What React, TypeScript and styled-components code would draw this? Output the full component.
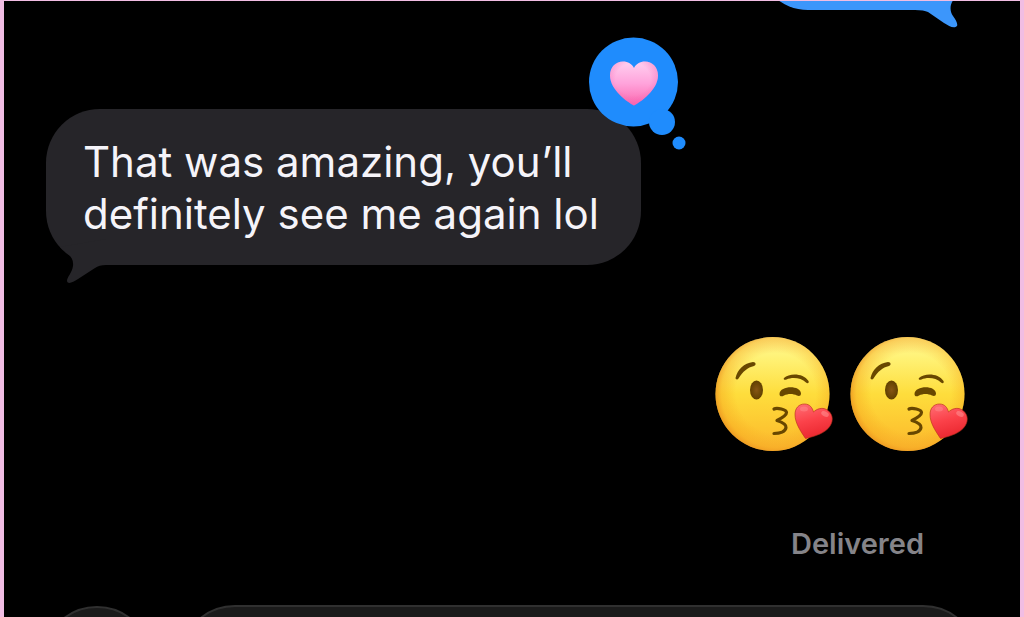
import React from "react";
import styled, { createGlobalStyle } from "styled-components";

const GlobalStyle = createGlobalStyle`
  * { box-sizing: border-box; }
  body {
    margin: 0;
    background: #000;
    font-family: Inter, "Liberation Sans", sans-serif;
  }
`;

const Screen = styled.main`
  display: flex;
  flex-direction: column;
  height: 100vh;
  overflow: hidden;
  background: #000;
  border: solid #f1bde3;
  border-width: 1px 4px 0;
`;

const Thread = styled.section`
  flex: none;
  display: flex;
  flex-direction: column;
  height: 604px;
  padding: 0 50px 0 42px;
`;

const SentBubble = styled.div`
  position: relative;
  flex: none;
  align-self: flex-end;
  width: 212px;
  height: 100px;
  margin-top: -91px;
  border-radius: 50px;
  background: #3c96fb;
`;

const SentTail = styled.svg`
  position: absolute;
  right: 11px;
  bottom: -20px;
`;

const ReceivedBubble = styled.div`
  position: relative;
  align-self: flex-start;
  margin-top: 99px;
  padding: 27px 42px 25px 37px;
  border-radius: 54px;
  background: #262529;
`;

const ReceivedTail = styled.svg`
  position: absolute;
  left: 10px;
  bottom: -20px;
`;

const MessageText = styled.p`
  margin: 0;
  color: #f5f4f9;
  font-size: 42px;
  line-height: 52px;
  white-space: nowrap;
`;

const Reaction = styled.svg`
  position: absolute;
  top: -73px;
  right: -46px;
`;

const EmojiMessage = styled.div`
  display: flex;
  align-self: flex-end;
  gap: 15px;
  margin-top: 71px;
`;

const Status = styled.p`
  align-self: flex-end;
  margin: 74px 46px 0 0;
  color: #858489;
  font-size: 29px;
  font-weight: 600;
  line-height: 36px;
`;

const Composer = styled.form`
  flex: none;
  display: flex;
  gap: 27px;
  padding: 0 41px 0 38px;
`;

const AddButton = styled.button`
  flex: none;
  width: 110px;
  height: 110px;
  margin-top: 1px;
  border: 2px solid #303030;
  border-radius: 50%;
  background: #1b1b1b;
`;

const MessageField = styled.input`
  flex: 1;
  min-width: 0;
  height: 112px;
  padding: 0 48px;
  border: 2px solid #303030;
  border-radius: 56px;
  background: #1b1b1b;
  color: #f5f4f9;
  font: inherit;
  font-size: 42px;
`;

function KissFace({ id }: { id: string }) {
  return (
    <svg width="120" height="116" viewBox="0 0 120 116" role="img" aria-label="Face blowing a kiss">
      <defs>
        <linearGradient id={`${id}-face`} x1="0" y1="0" x2="0" y2="1">
          <stop offset="0" stopColor="#fdea86" />
          <stop offset="0.15" stopColor="#fff47c" />
          <stop offset="0.5" stopColor="#fedd3c" />
          <stop offset="0.8" stopColor="#fdc631" />
          <stop offset="1" stopColor="#fab832" />
        </linearGradient>
        <radialGradient id={`${id}-rim`} cx="0.53" cy="0.49" r="0.53">
          <stop offset="0.66" stopColor="#f5a21d" stopOpacity="0" />
          <stop offset="0.9" stopColor="#f5a21d" stopOpacity="0.4" />
          <stop offset="1" stopColor="#e98a1b" stopOpacity="0.7" />
        </radialGradient>
        <radialGradient id={`${id}-eye`}>
          <stop offset="0" stopColor="#865614" />
          <stop offset="1" stopColor="#604000" />
        </radialGradient>
        <linearGradient id={`${id}-heart`} x1="0.3" y1="0" x2="0.6" y2="1">
          <stop offset="0" stopColor="#ff6970" />
          <stop offset="0.45" stopColor="#fb424a" />
          <stop offset="1" stopColor="#e9252d" />
        </linearGradient>
      </defs>
      <circle cx="57.500" cy="58" r="57" fill={`url(#${id}-face)`} />
      <circle cx="57.500" cy="58" r="57" fill={`url(#${id}-rim)`} />
      <g fill="#684700">
        <path d="M20.500 42C22.500 33.500 29 27 38 26C41 26 41.500 29 39 30C32.500 31.500 28 35.500 23.500 42.500C22.500 44 20.500 43.500 20.500 42Z" />
        <path d="M69 42C74 37 88 36.500 93.500 45C94.500 47 92.500 48 91 46.500C86 41.500 77 41 71.500 43.500C69.500 44.200 68 43.500 69 42Z" />
        <path d="M64.500 58C65 49.500 85.500 49 86 57.500C86 60 84 60.500 82 59.500C78 57.500 73 57.500 69 59.500C66.500 61 64.500 60.500 64.500 58Z" />
      </g>
      <path
        d="M59 73C62 71.500 71.500 73.500 71.500 76.500C71.500 79.500 66 82.500 62 84.500C66.500 86 71.500 88.500 71 91.500C70.500 95.500 65 97.500 59 97.500"
        fill="none"
        stroke="#684700"
        strokeWidth="3.200"
        strokeLinecap="round"
        strokeLinejoin="round"
      />
      <ellipse cx="41.500" cy="54" rx="6.500" ry="9.500" fill={`url(#${id}-eye)`} />
      <path
        d="M90.500 102.500C85.500 95 80 87 80 78.500C80 72 84 68 89.500 68C95 68 97.500 72 98.500 76C101.500 73 107 71 111.500 73.500C117.500 77 119 84 115 90C110.500 97 101 100 90.500 102.500Z"
        fill={`url(#${id}-heart)`}
        stroke="#b82f1c"
        strokeOpacity="0.65"
        strokeWidth="1"
      />
      <ellipse cx="89" cy="73" rx="4" ry="2.500" fill="#ff9898" opacity="0.4" />
      <ellipse cx="110" cy="78" rx="4" ry="2.500" fill="#ffb0b0" opacity="0.4" transform="rotate(25 110 78)" />
    </svg>
  );
}

function HeartReaction() {
  return (
    <Reaction width="100" height="116" viewBox="0 0 100 116" role="img" aria-label="Loved">
      <defs>
        <linearGradient id="pink-heart" x1="0" y1="0" x2="0" y2="1">
          <stop offset="0" stopColor="#ffd0f0" />
          <stop offset="0.5" stopColor="#ffa3db" />
          <stop offset="1" stopColor="#fb68ae" />
        </linearGradient>
        <radialGradient id="heart-edge" cx="0.48" cy="0.4" r="0.6">
          <stop offset="0.6" stopColor="#f55fae" stopOpacity="0" />
          <stop offset="1" stopColor="#f55fae" stopOpacity="0.5" />
        </radialGradient>
      </defs>
      <g fill="#1f8cfd">
        <circle cx="46.500" cy="46" r="44.500" />
        <circle cx="75" cy="86" r="13" />
        <circle cx="92" cy="107" r="6.500" />
      </g>
      {["url(#pink-heart)", "url(#heart-edge)"].map((fill) => (
        <path
          key={fill}
          d="M47 69.500C41 66.500 23 54 23 39.500C23 31 29 25.500 36 25.500C41 25.500 45 28 47 32C49 28 53 25.500 58 25.500C65 25.500 71 31 71 39.500C71 54 53 66.500 47 69.500Z"
          fill={fill}
        />
      ))}
    </Reaction>
  );
}

export default function App() {
  return (
    <>
      <GlobalStyle />
      <Screen>
        <Thread aria-label="Conversation">
          <SentBubble>
            <SentTail width="44" height="32" viewBox="0 0 44 32" aria-hidden="true">
              <path
                d="M40 0C35 5 34 12 38 18C41 22 43 26 42 28C39 31 34 28 29 25L13 14Q9 12 0 12V0Z"
                fill="#3c96fb"
              />
            </SentTail>
          </SentBubble>
          <ReceivedBubble>
            <MessageText>
              That was amazing, you’ll
              <br />
              definitely see me again lol
            </MessageText>
            <ReceivedTail width="54" height="46" viewBox="0 0 54 46" aria-hidden="true">
              <path
                d="M4 8C12 15 18 18 17 27C16 34 11 38 11 42C12 46 17 43 22 40L39 29Q43 26 50 26V0Z"
                fill="#262529"
              />
            </ReceivedTail>
            <HeartReaction />
          </ReceivedBubble>
          <EmojiMessage>
            <KissFace id="first" />
            <KissFace id="second" />
          </EmojiMessage>
          <Status>Delivered</Status>
        </Thread>
        <Composer>
          <AddButton type="button" aria-label="Add attachment" />
          <MessageField type="text" aria-label="Message" />
        </Composer>
      </Screen>
    </>
  );
}
